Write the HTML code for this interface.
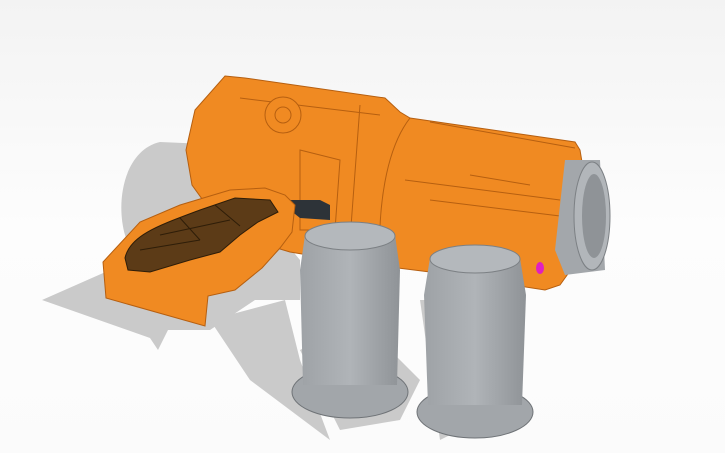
<!DOCTYPE html>
<html><head><style>
html,body{margin:0;padding:0;width:725px;height:453px;overflow:hidden;background:linear-gradient(#f3f3f3,#fdfdfd 50%,#fbfbfb);}
svg{display:block}
</style></head><body>
<svg width="725" height="453" viewBox="0 0 725 453">
<defs>
<linearGradient id="cyl" x1="0" x2="1">
<stop offset="0" stop-color="#9ea2a6"/><stop offset="0.5" stop-color="#b0b4b8"/><stop offset="1" stop-color="#8f9397"/>
</linearGradient>
</defs>
<g fill="#cacaca">
<path d="M160,142 C125,150 115,200 125,235 C130,250 150,260 170,258 L110,270 L42,300 L150,338 L158,350 L168,330 L210,330 L255,300 L300,300 L300,260 L250,200 L230,145 Z"/>
<path d="M210,320 L285,300 L300,360 L330,440 L250,380 Z"/>
<path d="M300,350 L360,320 L420,380 L400,420 L340,430 Z"/>
<path d="M420,300 L470,300 L520,400 L440,440 Z"/>
</g>
<path fill="#f08a22" stroke="#b65f10" stroke-width="1" d="M225,76 L245,78 L385,98 L400,112 L410,118 L575,142 L580,150 L585,180 L585,250 L560,285 L545,290 L430,272 L350,262 L290,252 L250,240 L210,210 L192,185 L186,150 L195,110 Z"/>
<path fill="none" stroke="#b65f10" stroke-width="1" d="M240,98 L380,115 M360,105 L350,240 M410,118 C385,150 378,210 380,260 M405,180 L560,200 M430,200 L560,216 M470,175 L530,185 M430,122 L575,148 M300,150 L340,160 L335,230 L300,230 Z"/>
<circle cx="283" cy="115" r="18" fill="#f08a22" stroke="#b65f10"/>
<circle cx="283" cy="115" r="8" fill="none" stroke="#b65f10"/>
<path fill="#2d3338" d="M290,200 L320,200 L330,205 L330,220 L300,218 L290,210 Z"/>
<path fill="#f08a22" stroke="#b65f10" stroke-width="1" d="M103,262 L106,298 L205,326 L208,296 L235,290 L262,268 L280,248 L292,232 L295,205 L285,195 L265,188 L230,190 L180,205 L140,222 Z"/>
<path fill="#5c3b17" stroke="#2e1d08" d="M125,258 C130,235 160,225 200,210 L235,198 L270,200 L278,212 L258,222 L240,235 L220,252 L190,260 L150,272 L128,270 Z"/>
<path fill="none" stroke="#2e1d08" d="M180,218 L200,240 M215,205 L240,226 M140,250 L200,240 M160,235 L230,220"/>
<path fill="#a3a7ab" d="M565,160 L600,160 L605,270 L565,275 L555,250 Z"/>
<ellipse cx="592" cy="216" rx="18" ry="54" fill="#b2b6ba" stroke="#7c8084"/>
<ellipse cx="594" cy="216" rx="12" ry="42" fill="#8f9397"/>
<ellipse cx="540" cy="268" rx="4" ry="6" fill="#e020c0"/>
<ellipse cx="350" cy="392" rx="58" ry="26" fill="#a2a6aa" stroke="#6f7377"/>
<path fill="url(#cyl)" d="M305,235 L395,235 L400,270 L397,385 L303,385 L300,270 Z"/>
<ellipse cx="350" cy="236" rx="45" ry="14" fill="#b4b8bc" stroke="#7c8084"/>
<ellipse cx="475" cy="412" rx="58" ry="26" fill="#a2a6aa" stroke="#6f7377"/>
<path fill="url(#cyl)" d="M430,258 L520,258 L526,295 L522,405 L428,405 L424,295 Z"/>
<ellipse cx="475" cy="259" rx="45" ry="14" fill="#b4b8bc" stroke="#7c8084"/>
</svg>
</body></html>
